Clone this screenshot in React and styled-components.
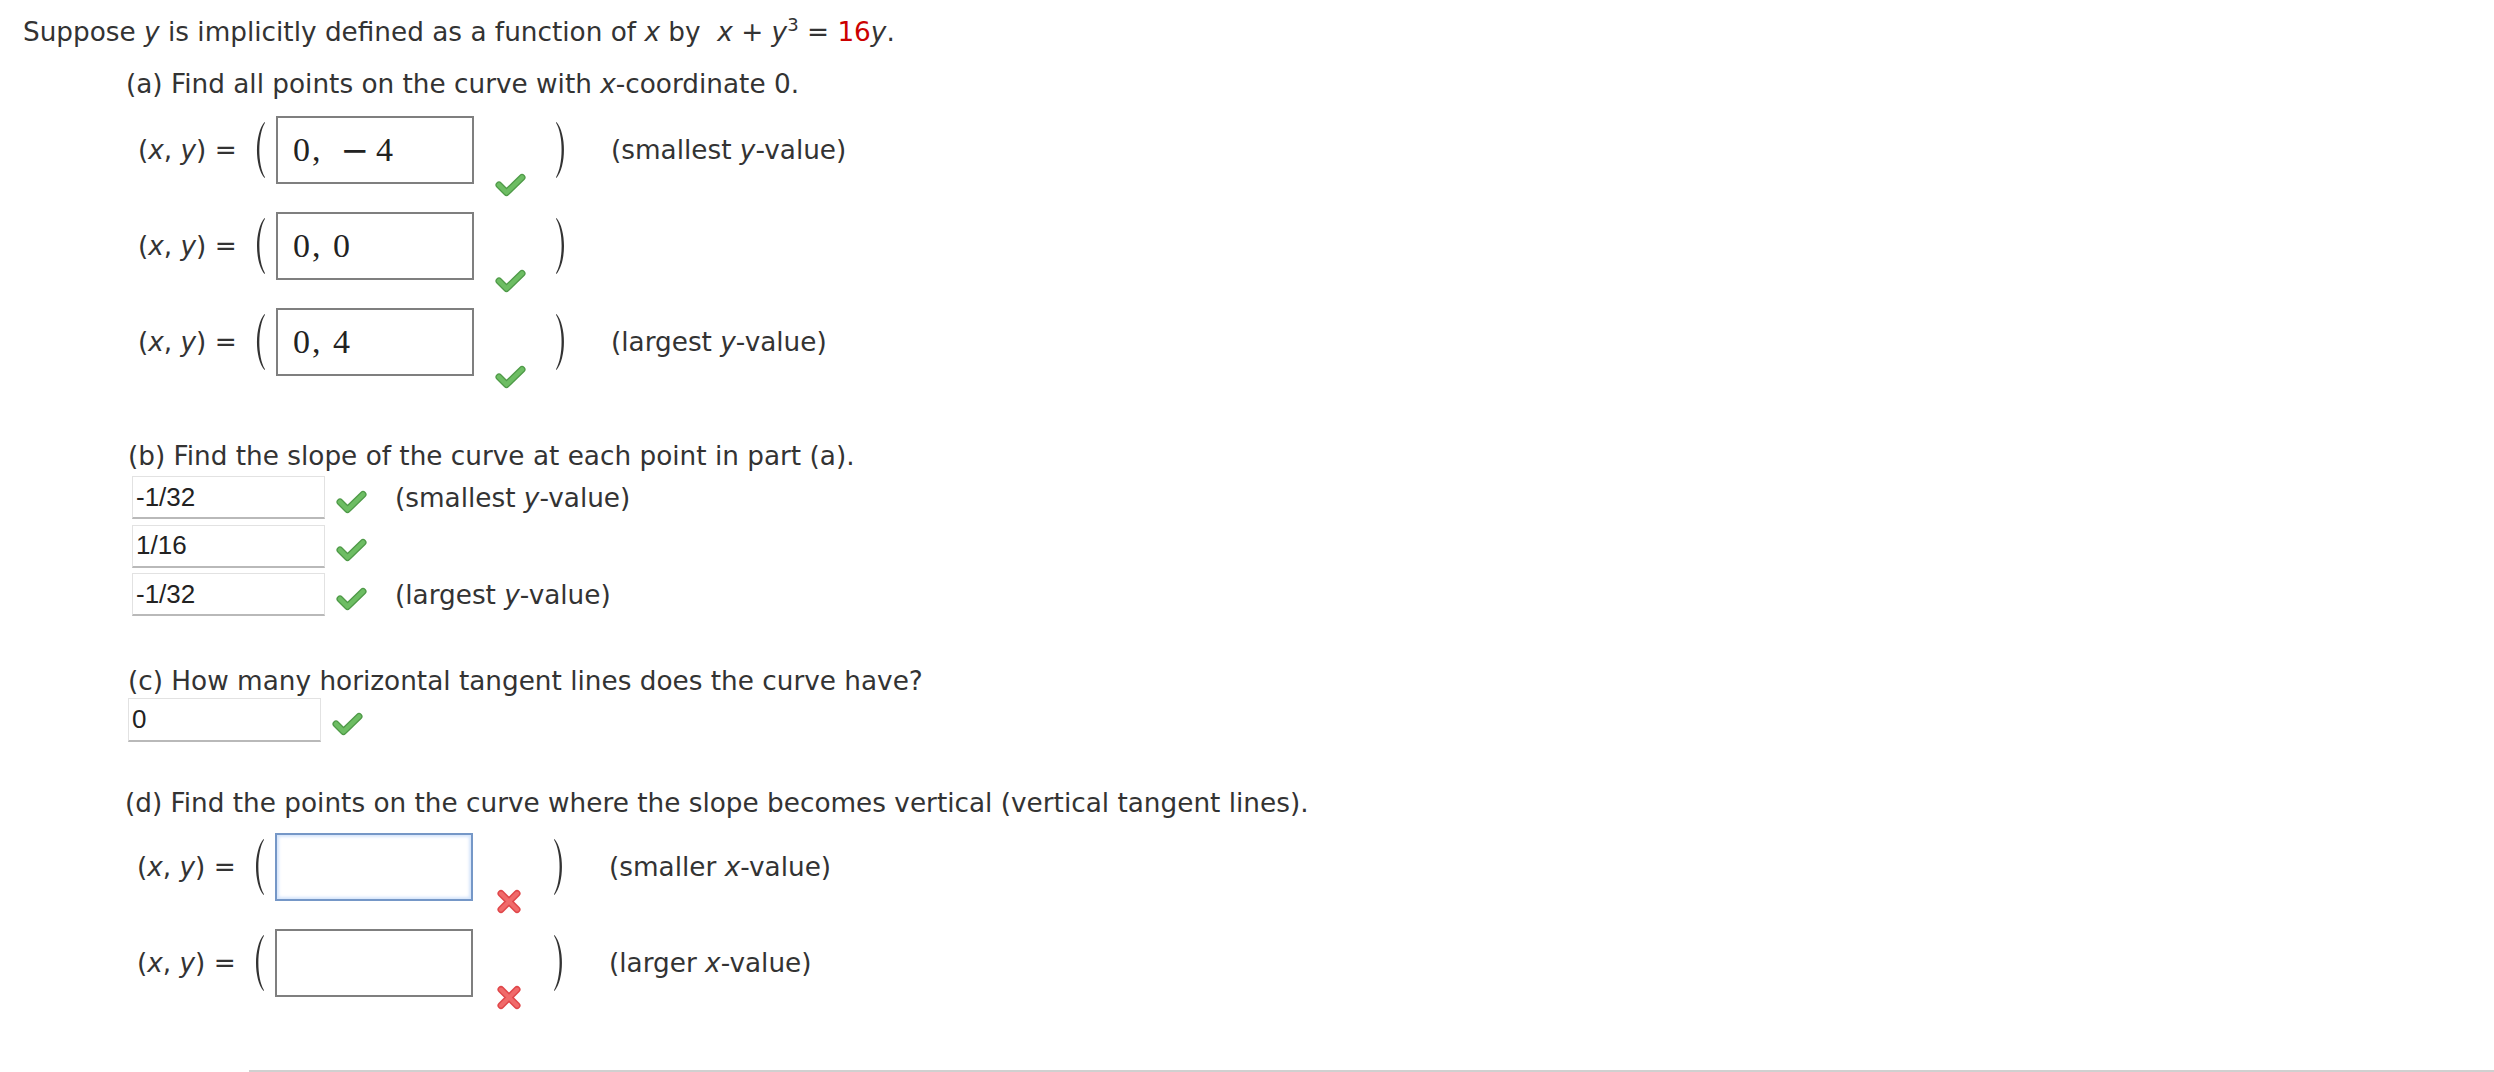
import React from "react";
import styled, { createGlobalStyle } from "styled-components";

const GlobalStyle = createGlobalStyle`
  html, body {
    margin: 0;
    padding: 0;
    background: #fff;
  }
  body {
    font-family: "DejaVu Sans", Verdana, sans-serif;
    color: #333;
  }
`;

const Page = styled.div`
  width: 2494px;
  height: 1072px;
  box-sizing: border-box;
  padding: 14px 0 0 23px;
  position: relative;
  overflow: hidden;
`;

const Prompt = styled.div`
  font-size: 26.3px;
  line-height: 36px;
  white-space: pre;
`;

const Red = styled.span`
  color: #cc0000;
`;

const Sup = styled.sup`
  font-size: 18px;
  line-height: 0;
  vertical-align: 10px;
`;

const Part = styled.section`
  margin-left: ${(p) => p.$indent || 103}px;
  margin-top: ${(p) => p.$top || 0}px;
`;

const PartTitle = styled.div`
  font-size: 26.3px;
  line-height: 36px;
  white-space: pre;
`;

const Rows = styled.div`
  display: flex;
  flex-direction: column;
  gap: ${(p) => p.$gap}px;
  margin-top: ${(p) => p.$top}px;
  padding-left: ${(p) => p.$pad || 0}px;
`;

const PointRow = styled.div`
  display: flex;
  align-items: center;
  height: 68px;
`;

const Label = styled.div`
  width: 114px;
  font-size: 26.3px;
  white-space: pre;
`;

const Paren = styled.svg`
  width: 14px;
  height: 58px;
  flex: none;
`;

const MathBox = styled.div`
  box-sizing: border-box;
  width: 198px;
  height: 68px;
  margin-left: 10px;
  border: 2px solid ${(p) => (p.$focused ? "#7597c7" : "#7f7f7f")};
  box-shadow: ${(p) => (p.$focused ? "inset 0 0 3px 2px #d6e5fb" : "none")};
  display: flex;
  align-items: center;
  padding-left: 15px;
  font-family: "Liberation Serif", "Times New Roman", serif;
  font-size: 34px;
  letter-spacing: 2px;
  color: #222;
  white-space: pre;
`;

const Minus = styled.span`
  font-family: "DejaVu Serif", serif;
  letter-spacing: 0;
  margin: 0 7px 0 18px;
`;

const MarkSlot = styled.div`
  align-self: flex-end;
  margin: 0 ${(p) => p.$right}px -13px ${(p) => p.$left}px;
  line-height: 0;
`;

const Note = styled.div`
  font-size: 26.3px;
  white-space: pre;
  margin-left: ${(p) => p.$gap || 0}px;
`;

const AnswerRow = styled.div`
  display: flex;
  align-items: center;
  height: ${(p) => p.$height || 43}px;
`;

const AnswerField = styled.input`
  box-sizing: border-box;
  width: 193px;
  height: 100%;
  margin: 0;
  padding: 0 0 0 3px;
  border: 1px solid #e2e2e2;
  border-bottom: 2px solid #b9b9b9;
  border-radius: 0;
  outline: none;
  background: #fff;
  font-family: "Liberation Sans", Arial, sans-serif;
  font-size: 26px;
  color: #222;
`;

const InlineMark = styled.div`
  margin: 8px 28px 0 11px;
  line-height: 0;
`;

const Rule = styled.hr`
  position: absolute;
  left: 249px;
  right: 0;
  bottom: 0;
  margin: 0;
  border: 0;
  border-top: 2px solid #d0d0d0;
`;

function Check() {
  return (
    <svg width="31" height="24" viewBox="0 0 31 24">
      <path
        d="M4 12 L11.5 19.5 L27 4.5"
        fill="none"
        stroke="#4f9a48"
        strokeWidth="7"
        strokeLinecap="round"
        strokeLinejoin="round"
      />
      <path
        d="M4 12 L11.5 19.5 L27 4.5"
        fill="none"
        stroke="#6dbd63"
        strokeWidth="4.5"
        strokeLinecap="round"
        strokeLinejoin="round"
      />
    </svg>
  );
}

function Cross() {
  return (
    <svg width="26" height="25" viewBox="0 0 26 25">
      <path
        d="M5 4.5 L21 20.5 M21 4.5 L5 20.5"
        fill="none"
        stroke="#e0474a"
        strokeWidth="7"
        strokeLinecap="round"
      />
      <path
        d="M5 4.5 L21 20.5 M21 4.5 L5 20.5"
        fill="none"
        stroke="#f06a6a"
        strokeWidth="4"
        strokeLinecap="round"
      />
    </svg>
  );
}

function LeftParen() {
  return (
    <Paren viewBox="0 0 14 58">
      <path d="M12.5 1 C2.5 13, 2.5 45, 12.5 57 L13 56.2 C5.5 44, 5.5 14, 13 1.8 Z" fill="#333" />
    </Paren>
  );
}

function RightParen() {
  return (
    <Paren viewBox="0 0 14 58">
      <path d="M1.5 1 C11.5 13, 11.5 45, 1.5 57 L1 56.2 C8.5 44, 8.5 14, 1 1.8 Z" fill="#333" />
    </Paren>
  );
}

function XY() {
  return (
    <Label>
      (<i>x</i>, <i>y</i>) =
    </Label>
  );
}

function Point({ value, ok, focused, note }) {
  return (
    <PointRow>
      <XY />
      <LeftParen />
      <MathBox $focused={focused}>{value}</MathBox>
      <MarkSlot $left={ok ? 21 : 23} $right={ok ? 29 : 31}>
        {ok ? <Check /> : <Cross />}
      </MarkSlot>
      <RightParen />
      {note && <Note $gap={42}>{note}</Note>}
    </PointRow>
  );
}

function Answer({ value, note, height }) {
  return (
    <AnswerRow $height={height}>
      <AnswerField readOnly defaultValue={value} />
      <InlineMark>
        <Check />
      </InlineMark>
      {note && <Note>{note}</Note>}
    </AnswerRow>
  );
}

export default function App() {
  return (
    <Page>
      <GlobalStyle />
      <Prompt>
        Suppose <i>y</i> is implicitly defined as a function of <i>x</i> by  <i>x</i> + <i>y</i>
        <Sup>3</Sup> = <Red>16</Red>
        <i>y</i>.
      </Prompt>

      <Part $top={16}>
        <PartTitle>(a) Find all points on the curve with <i>x</i>-coordinate 0.</PartTitle>
        <Rows $gap={28} $top={14} $pad={12}>
          <Point
            value={
              <>
                0,<Minus>−</Minus>4
              </>
            }
            ok
            note={<>(smallest <i>y</i>-value)</>}
          />
          <Point value="0, 0" ok />
          <Point value="0, 4" ok note={<>(largest <i>y</i>-value)</>} />
        </Rows>
      </Part>

      <Part $top={62} $indent={105}>
        <PartTitle>(b) Find the slope of the curve at each point in part (a).</PartTitle>
        <Rows $gap={5.5} $top={2} $pad={4}>
          <Answer value="-1/32" note={<>(smallest <i>y</i>-value)</>} />
          <Answer value="1/16" />
          <Answer value="-1/32" note={<>(largest <i>y</i>-value)</>} />
        </Rows>
      </Part>

      <Part $top={47} $indent={105}>
        <PartTitle>(c) How many horizontal tangent lines does the curve have?</PartTitle>
        <Rows $gap={0} $top={-1}>
          <Answer value="0" height={44} />
        </Rows>
      </Part>

      <Part $top={43} $indent={102}>
        <PartTitle>(d) Find the points on the curve where the slope becomes vertical (vertical tangent lines).</PartTitle>
        <Rows $gap={28} $top={12} $pad={12}>
          <Point focused note={<>(smaller <i>x</i>-value)</>} />
          <Point note={<>(larger <i>x</i>-value)</>} />
        </Rows>
      </Part>

      <Rule />
    </Page>
  );
}
